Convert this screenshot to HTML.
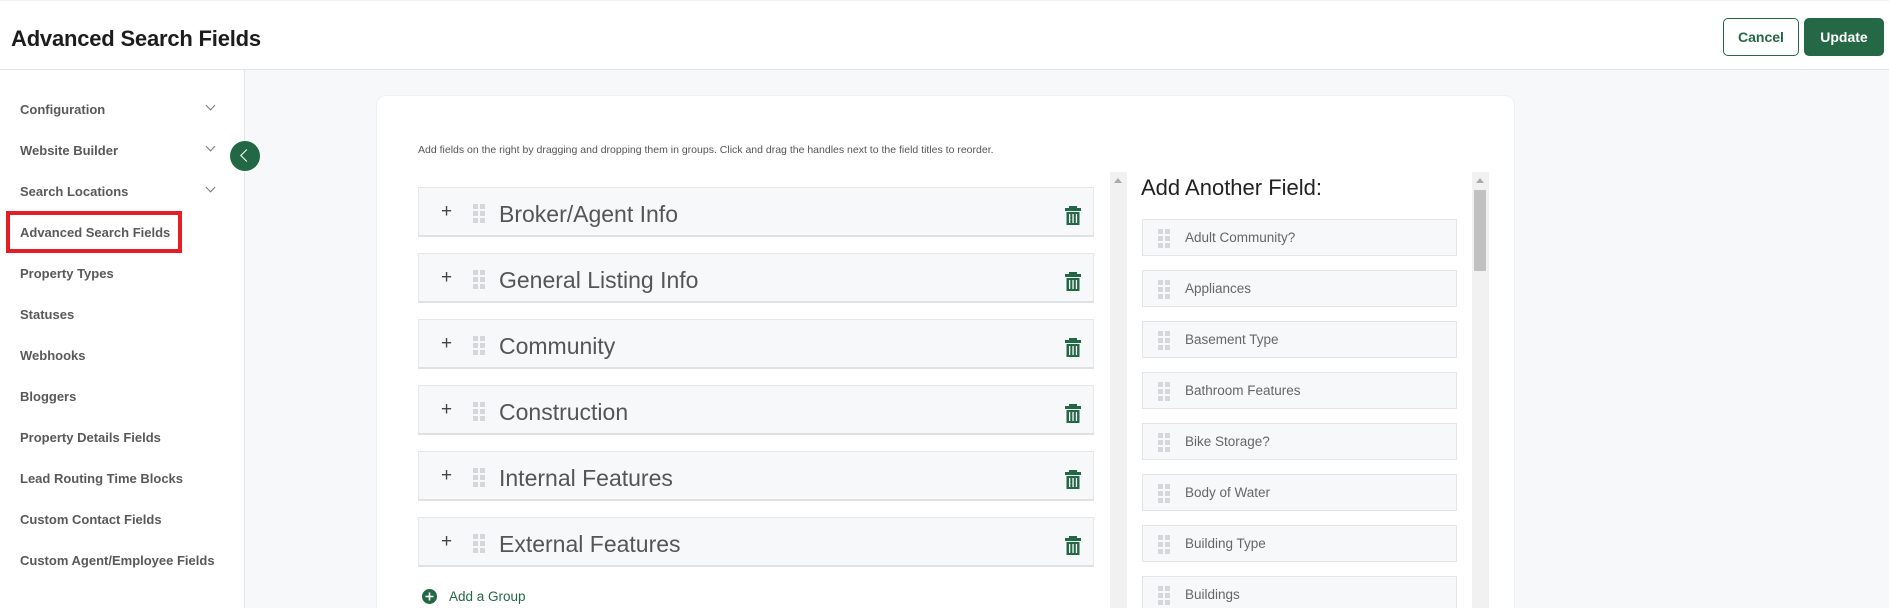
<!DOCTYPE html>
<html><head><meta charset="utf-8"><style>
*{box-sizing:border-box;margin:0;padding:0}
html{width:1889px;height:608px;overflow:hidden}
body{width:1889px;height:608px;overflow:hidden;background:#f7f8fa;font-family:"Liberation Sans",sans-serif;position:relative}
.hdr{position:absolute;left:0;top:0;width:1889px;height:70px;background:#fff;border-bottom:1px solid #e3e5e8;border-top:1px solid #f0f0f0}
.hdr h1{position:absolute;left:11px;top:25px;font-size:22px;font-weight:bold;color:#1c1c1c;letter-spacing:-0.2px}
.btn{position:absolute;top:17px;height:38px;border-radius:5px;font-size:14px;font-weight:bold;display:flex;align-items:center;justify-content:center}
.side{position:absolute;left:0;top:70px;width:245px;height:538px;background:#fff;border-right:1px solid #e3e5e8}
.si{position:absolute;left:20px;font-size:13px;font-weight:bold;color:#595959}
.chev{position:absolute;left:207px;width:7px;height:7px;border-right:1.5px solid #777;border-bottom:1.5px solid #777;transform:rotate(45deg)}
.card{position:absolute;left:376px;top:95px;width:1139px;height:513px;background:#fff;border-radius:10px 10px 0 0;border:1px solid #eef0f2;border-bottom:0}
.grp{position:absolute;left:418px;width:676px;height:50px;background:#f7f8fa;border:1px solid #e6e7e9;border-bottom:2px solid #e0e1e3}
.grp .pl{position:absolute;left:22px;top:13px;font-size:19px;color:#444}
.grp .t{position:absolute;left:80px;top:13px;font-size:23px;color:#555}
.hd{position:absolute;width:12px;height:18px}
.hd i{position:absolute;width:5px;height:5px;background:#d5d7da}
.tr{position:absolute;left:646px;top:18px}
.it{position:absolute;left:1142px;width:315px;height:37px;background:#f7f8fa;border:1px solid #e3e5e8}
.it .t{position:absolute;left:42px;top:10px;font-size:13.5px;color:#666}
</style></head><body>
<div class="hdr"><h1>Advanced Search Fields</h1>
<div class="btn" style="left:1723px;width:76px;border:1.5px solid #236845;color:#236845;background:#fff">Cancel</div>
<div class="btn" style="left:1804px;width:80px;background:#256846;color:#fff">Update</div></div>
<div class="side">
<div class="si" style="top:32px">Configuration</div><div class="chev" style="top:32px"></div>
<div class="si" style="top:73px">Website Builder</div><div class="chev" style="top:73px"></div>
<div class="si" style="top:114px">Search Locations</div><div class="chev" style="top:114px"></div>
<div style="position:absolute;left:6px;top:141px;width:176px;height:42px;border:4px solid #e41e26"></div>
<div class="si" style="top:155px">Advanced Search Fields</div>
<div class="si" style="top:196px">Property Types</div>
<div class="si" style="top:237px">Statuses</div>
<div class="si" style="top:278px">Webhooks</div>
<div class="si" style="top:319px">Bloggers</div>
<div class="si" style="top:360px">Property Details Fields</div>
<div class="si" style="top:401px">Lead Routing Time Blocks</div>
<div class="si" style="top:442px">Custom Contact Fields</div>
<div class="si" style="top:483px">Custom Agent/Employee Fields</div>
</div>
<div style="position:absolute;left:230px;top:141px;width:30px;height:30px;border-radius:50%;background:#236845"><div style="position:absolute;left:12px;top:10px;width:9px;height:9px;border-left:1.5px solid #fff;border-bottom:1.5px solid #fff;transform:rotate(45deg)"></div></div>
<div class="card"></div>
<div style="position:absolute;left:418px;top:144px;font-size:10.5px;color:#555">Add fields on the right by dragging and dropping them in groups. Click and drag the handles next to the field titles to reorder.</div>

<div class="grp" style="top:187px"><span class="pl">+</span><div class="hd" style="left:54px;top:16px"><i style="left:0;top:0"></i><i style="left:7px;top:0"></i><i style="left:0;top:7px"></i><i style="left:7px;top:7px"></i><i style="left:0;top:14px"></i><i style="left:7px;top:14px"></i></div><span class="t">Broker/Agent Info</span><svg class="tr" width="16" height="19" viewBox="0 0 16 19"><rect x="4" y="0" width="8" height="3" fill="#236845"/><rect x="0" y="2" width="16" height="3" fill="#236845"/><rect x="1.5" y="6" width="13" height="13" fill="#236845"/><rect x="4" y="8" width="1.3" height="9" fill="#fff"/><rect x="7.4" y="8" width="1.3" height="9" fill="#fff"/><rect x="10.8" y="8" width="1.3" height="9" fill="#fff"/></svg></div>
<div class="grp" style="top:253px"><span class="pl">+</span><div class="hd" style="left:54px;top:16px"><i style="left:0;top:0"></i><i style="left:7px;top:0"></i><i style="left:0;top:7px"></i><i style="left:7px;top:7px"></i><i style="left:0;top:14px"></i><i style="left:7px;top:14px"></i></div><span class="t">General Listing Info</span><svg class="tr" width="16" height="19" viewBox="0 0 16 19"><rect x="4" y="0" width="8" height="3" fill="#236845"/><rect x="0" y="2" width="16" height="3" fill="#236845"/><rect x="1.5" y="6" width="13" height="13" fill="#236845"/><rect x="4" y="8" width="1.3" height="9" fill="#fff"/><rect x="7.4" y="8" width="1.3" height="9" fill="#fff"/><rect x="10.8" y="8" width="1.3" height="9" fill="#fff"/></svg></div>
<div class="grp" style="top:319px"><span class="pl">+</span><div class="hd" style="left:54px;top:16px"><i style="left:0;top:0"></i><i style="left:7px;top:0"></i><i style="left:0;top:7px"></i><i style="left:7px;top:7px"></i><i style="left:0;top:14px"></i><i style="left:7px;top:14px"></i></div><span class="t">Community</span><svg class="tr" width="16" height="19" viewBox="0 0 16 19"><rect x="4" y="0" width="8" height="3" fill="#236845"/><rect x="0" y="2" width="16" height="3" fill="#236845"/><rect x="1.5" y="6" width="13" height="13" fill="#236845"/><rect x="4" y="8" width="1.3" height="9" fill="#fff"/><rect x="7.4" y="8" width="1.3" height="9" fill="#fff"/><rect x="10.8" y="8" width="1.3" height="9" fill="#fff"/></svg></div>
<div class="grp" style="top:385px"><span class="pl">+</span><div class="hd" style="left:54px;top:16px"><i style="left:0;top:0"></i><i style="left:7px;top:0"></i><i style="left:0;top:7px"></i><i style="left:7px;top:7px"></i><i style="left:0;top:14px"></i><i style="left:7px;top:14px"></i></div><span class="t">Construction</span><svg class="tr" width="16" height="19" viewBox="0 0 16 19"><rect x="4" y="0" width="8" height="3" fill="#236845"/><rect x="0" y="2" width="16" height="3" fill="#236845"/><rect x="1.5" y="6" width="13" height="13" fill="#236845"/><rect x="4" y="8" width="1.3" height="9" fill="#fff"/><rect x="7.4" y="8" width="1.3" height="9" fill="#fff"/><rect x="10.8" y="8" width="1.3" height="9" fill="#fff"/></svg></div>
<div class="grp" style="top:451px"><span class="pl">+</span><div class="hd" style="left:54px;top:16px"><i style="left:0;top:0"></i><i style="left:7px;top:0"></i><i style="left:0;top:7px"></i><i style="left:7px;top:7px"></i><i style="left:0;top:14px"></i><i style="left:7px;top:14px"></i></div><span class="t">Internal Features</span><svg class="tr" width="16" height="19" viewBox="0 0 16 19"><rect x="4" y="0" width="8" height="3" fill="#236845"/><rect x="0" y="2" width="16" height="3" fill="#236845"/><rect x="1.5" y="6" width="13" height="13" fill="#236845"/><rect x="4" y="8" width="1.3" height="9" fill="#fff"/><rect x="7.4" y="8" width="1.3" height="9" fill="#fff"/><rect x="10.8" y="8" width="1.3" height="9" fill="#fff"/></svg></div>
<div class="grp" style="top:517px"><span class="pl">+</span><div class="hd" style="left:54px;top:16px"><i style="left:0;top:0"></i><i style="left:7px;top:0"></i><i style="left:0;top:7px"></i><i style="left:7px;top:7px"></i><i style="left:0;top:14px"></i><i style="left:7px;top:14px"></i></div><span class="t">External Features</span><svg class="tr" width="16" height="19" viewBox="0 0 16 19"><rect x="4" y="0" width="8" height="3" fill="#236845"/><rect x="0" y="2" width="16" height="3" fill="#236845"/><rect x="1.5" y="6" width="13" height="13" fill="#236845"/><rect x="4" y="8" width="1.3" height="9" fill="#fff"/><rect x="7.4" y="8" width="1.3" height="9" fill="#fff"/><rect x="10.8" y="8" width="1.3" height="9" fill="#fff"/></svg></div>

<svg style="position:absolute;left:422px;top:589px" width="15" height="15" viewBox="0 0 15 15"><circle cx="7.5" cy="7.5" r="7.5" fill="#236845"/><rect x="6.7" y="3.5" width="1.6" height="8" fill="#fff"/><rect x="3.5" y="6.7" width="8" height="1.6" fill="#fff"/></svg>
<div style="position:absolute;left:449px;top:589px;font-size:13.5px;color:#236845">Add a Group</div>

<div style="position:absolute;left:1110px;top:172px;width:17px;height:436px;background:#f1f1f1"></div>
<div style="position:absolute;left:1114px;top:178px;border:4px solid transparent;border-bottom:5px solid #aaa;border-top:0"></div>
<div style="position:absolute;left:1472px;top:172px;width:17px;height:436px;background:#f1f1f1"></div>
<div style="position:absolute;left:1476px;top:178px;border:4px solid transparent;border-bottom:5px solid #aaa;border-top:0"></div>
<div style="position:absolute;left:1474px;top:190px;width:12px;height:81px;background:#c1c1c1"></div>
<div style="position:absolute;left:1141px;top:175px;font-size:22px;color:#222">Add Another Field:</div>

<div class="it" style="top:219px"><div class="hd" style="left:15px;top:9px"><i style="left:0;top:0"></i><i style="left:7px;top:0"></i><i style="left:0;top:7px"></i><i style="left:7px;top:7px"></i><i style="left:0;top:14px"></i><i style="left:7px;top:14px"></i></div><span class="t">Adult Community?</span></div>
<div class="it" style="top:270px"><div class="hd" style="left:15px;top:9px"><i style="left:0;top:0"></i><i style="left:7px;top:0"></i><i style="left:0;top:7px"></i><i style="left:7px;top:7px"></i><i style="left:0;top:14px"></i><i style="left:7px;top:14px"></i></div><span class="t">Appliances</span></div>
<div class="it" style="top:321px"><div class="hd" style="left:15px;top:9px"><i style="left:0;top:0"></i><i style="left:7px;top:0"></i><i style="left:0;top:7px"></i><i style="left:7px;top:7px"></i><i style="left:0;top:14px"></i><i style="left:7px;top:14px"></i></div><span class="t">Basement Type</span></div>
<div class="it" style="top:372px"><div class="hd" style="left:15px;top:9px"><i style="left:0;top:0"></i><i style="left:7px;top:0"></i><i style="left:0;top:7px"></i><i style="left:7px;top:7px"></i><i style="left:0;top:14px"></i><i style="left:7px;top:14px"></i></div><span class="t">Bathroom Features</span></div>
<div class="it" style="top:423px"><div class="hd" style="left:15px;top:9px"><i style="left:0;top:0"></i><i style="left:7px;top:0"></i><i style="left:0;top:7px"></i><i style="left:7px;top:7px"></i><i style="left:0;top:14px"></i><i style="left:7px;top:14px"></i></div><span class="t">Bike Storage?</span></div>
<div class="it" style="top:474px"><div class="hd" style="left:15px;top:9px"><i style="left:0;top:0"></i><i style="left:7px;top:0"></i><i style="left:0;top:7px"></i><i style="left:7px;top:7px"></i><i style="left:0;top:14px"></i><i style="left:7px;top:14px"></i></div><span class="t">Body of Water</span></div>
<div class="it" style="top:525px"><div class="hd" style="left:15px;top:9px"><i style="left:0;top:0"></i><i style="left:7px;top:0"></i><i style="left:0;top:7px"></i><i style="left:7px;top:7px"></i><i style="left:0;top:14px"></i><i style="left:7px;top:14px"></i></div><span class="t">Building Type</span></div>
<div class="it" style="top:576px;height:32px;border-bottom:0"><div class="hd" style="left:15px;top:9px"><i style="left:0;top:0"></i><i style="left:7px;top:0"></i><i style="left:0;top:7px"></i><i style="left:7px;top:7px"></i><i style="left:0;top:14px"></i><i style="left:7px;top:14px"></i></div><span class="t">Buildings</span></div>
</body></html>
